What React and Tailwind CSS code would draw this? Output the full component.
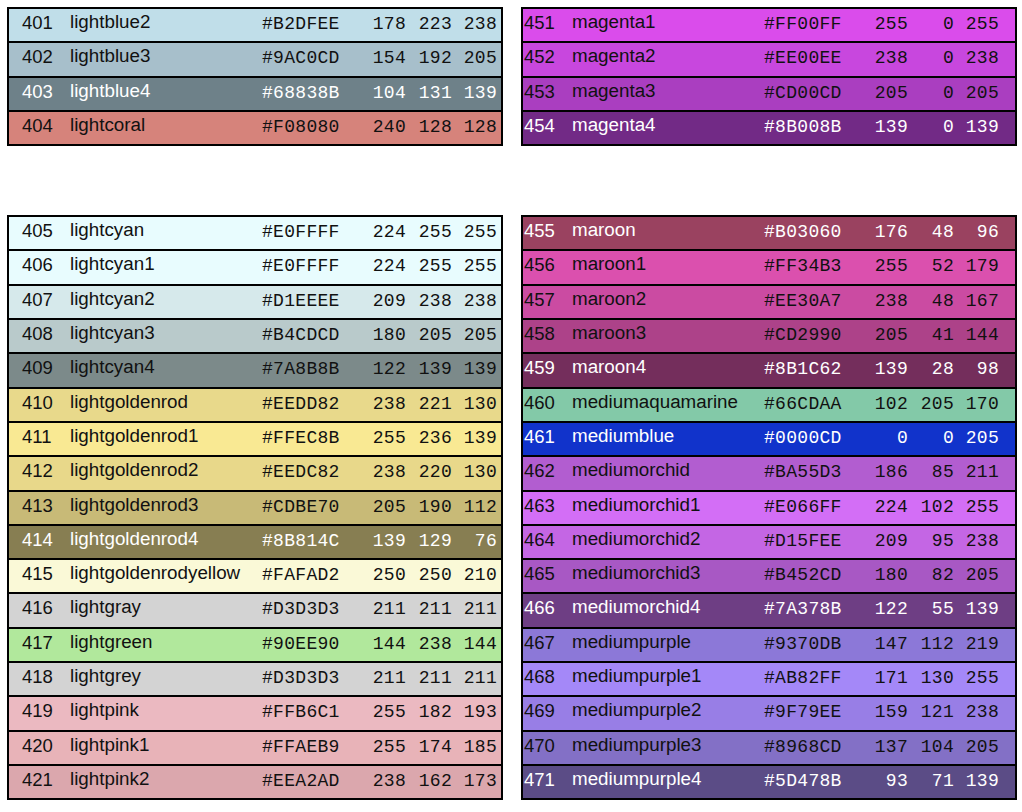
import React from "react";

// colour swatch tables: [num, name, hex, r, g, b, bg, light text?]
const topLeft = [
  [401, "lightblue2", "#B2DFEE", 178, 223, 238, "#c0dee9", false],
  [402, "lightblue3", "#9AC0CD", 154, 192, 205, "#a7bfcb", false],
  [403, "lightblue4", "#68838B", 104, 131, 139, "#6e8189", true],
  [404, "lightcoral", "#F08080", 240, 128, 128, "#d6837b", false],
];

const topRight = [
  [451, "magenta1", "#FF00FF", 255, 0, 255, "#da4ceb", false],
  [452, "magenta2", "#EE00EE", 238, 0, 238, "#c847de", false],
  [453, "magenta3", "#CD00CD", 205, 0, 205, "#aa3ec0", false],
  [454, "magenta4", "#8B008B", 139, 0, 139, "#722a86", true],
];

const bottomLeft = [
  [405, "lightcyan", "#E0FFFF", 224, 255, 255, "#e8fcfe", false],
  [406, "lightcyan1", "#E0FFFF", 224, 255, 255, "#e8fcfe", false],
  [407, "lightcyan2", "#D1EEEE", 209, 238, 238, "#d6e9eb", false],
  [408, "lightcyan3", "#B4CDCD", 180, 205, 205, "#b9cacb", false],
  [409, "lightcyan4", "#7A8B8B", 122, 139, 139, "#7c8a8a", false],
  [410, "lightgoldenrod", "#EEDD82", 238, 221, 130, "#e8d98b", false],
  [411, "lightgoldenrod1", "#FFEC8B", 255, 236, 139, "#f9e993", false],
  [412, "lightgoldenrod2", "#EEDC82", 238, 220, 130, "#e8d88a", false],
  [413, "lightgoldenrod3", "#CDBE70", 205, 190, 112, "#c8ba77", false],
  [414, "lightgoldenrod4", "#8B814C", 139, 129, 76, "#877e52", true],
  [415, "lightgoldenrodyellow", "#FAFAD2", 250, 250, 210, "#faf9d7", false],
  [416, "lightgray", "#D3D3D3", 211, 211, 211, "#d3d3d3", false],
  [417, "lightgreen", "#90EE90", 144, 238, 144, "#b1e89c", false],
  [418, "lightgrey", "#D3D3D3", 211, 211, 211, "#d3d3d3", false],
  [419, "lightpink", "#FFB6C1", 255, 182, 193, "#ebb9c1", false],
  [420, "lightpink1", "#FFAEB9", 255, 174, 185, "#e8b3b8", false],
  [421, "lightpink2", "#EEA2AD", 238, 162, 173, "#dba7ad", false],
];

const bottomRight = [
  [455, "maroon", "#B03060", 176, 48, 96, "#9a4260", true],
  [456, "maroon1", "#FF34B3", 255, 52, 179, "#db50ae", false],
  [457, "maroon2", "#EE30A7", 238, 48, 167, "#cb4ba2", false],
  [458, "maroon3", "#CD2990", 205, 41, 144, "#ad4289", false],
  [459, "maroon4", "#8B1C62", 139, 28, 98, "#742e5c", true],
  [460, "mediumaquamarine", "#66CDAA", 102, 205, 170, "#83c9a8", false],
  [461, "mediumblue", "#0000CD", 0, 0, 205, "#1133cb", true],
  [462, "mediumorchid", "#BA55D3", 186, 85, 211, "#b25dd0", false],
  [463, "mediumorchid1", "#E066FF", 224, 102, 255, "#d36ef6", false],
  [464, "mediumorchid2", "#D15FEE", 209, 95, 238, "#c466e4", false],
  [465, "mediumorchid3", "#B452CD", 180, 82, 205, "#a858c4", false],
  [466, "mediumorchid4", "#7A378B", 122, 55, 139, "#6e3e84", true],
  [467, "mediumpurple", "#9370DB", 147, 112, 219, "#8c78d8", false],
  [468, "mediumpurple1", "#AB82FF", 171, 130, 255, "#a488f8", false],
  [469, "mediumpurple2", "#9F79EE", 159, 121, 238, "#987ee6", false],
  [470, "mediumpurple3", "#8968CD", 137, 104, 205, "#8370c6", false],
  [471, "mediumpurple4", "#5D478B", 93, 71, 139, "#5b4c86", true],
];

function SwatchTable({ rows, shifted }) {
  return (
    <div className="flex flex-col gap-[2px] border-2 border-black bg-black">
      {rows.map(([num, name, hex, r, g, b, bg, light]) => (
        <div
          key={num}
          className={`flex items-start h-[32.3px] ${shifted ? "pl-[1px]" : "pl-[13px]"} ${light ? "text-white" : "text-[#111]"}`}
          style={{ backgroundColor: bg }}
        >
          <div className="w-[48px] text-[18.5px] leading-[28px] font-['Liberation_Sans',Arial,sans-serif]">
            {num}
          </div>
          <div className="w-[192px] text-[18.8px] leading-[26px] font-['Liberation_Sans',Arial,sans-serif] whitespace-nowrap">
            {name}
          </div>
          <div className="flex text-[18px] leading-[31px] font-['Liberation_Mono','Courier_New',monospace] tracking-[0.3px]">
            <span className="w-[98px]">{hex}</span>
            <span className="w-[46px] text-right">{r}</span>
            <span className="w-[46px] text-right">{g}</span>
            <span className="w-[45px] text-right">{b}</span>
          </div>
        </div>
      ))}
    </div>
  );
}

export default function App() {
  return (
    <div className="min-h-screen bg-white pl-[7px] pt-[7px]">
      <div className="grid grid-cols-[496px_496px] gap-x-[18px] gap-y-[69px] items-start">
        <SwatchTable rows={topLeft} />
        <SwatchTable rows={topRight} shifted />
        <SwatchTable rows={bottomLeft} />
        <SwatchTable rows={bottomRight} shifted />
      </div>
    </div>
  );
}
